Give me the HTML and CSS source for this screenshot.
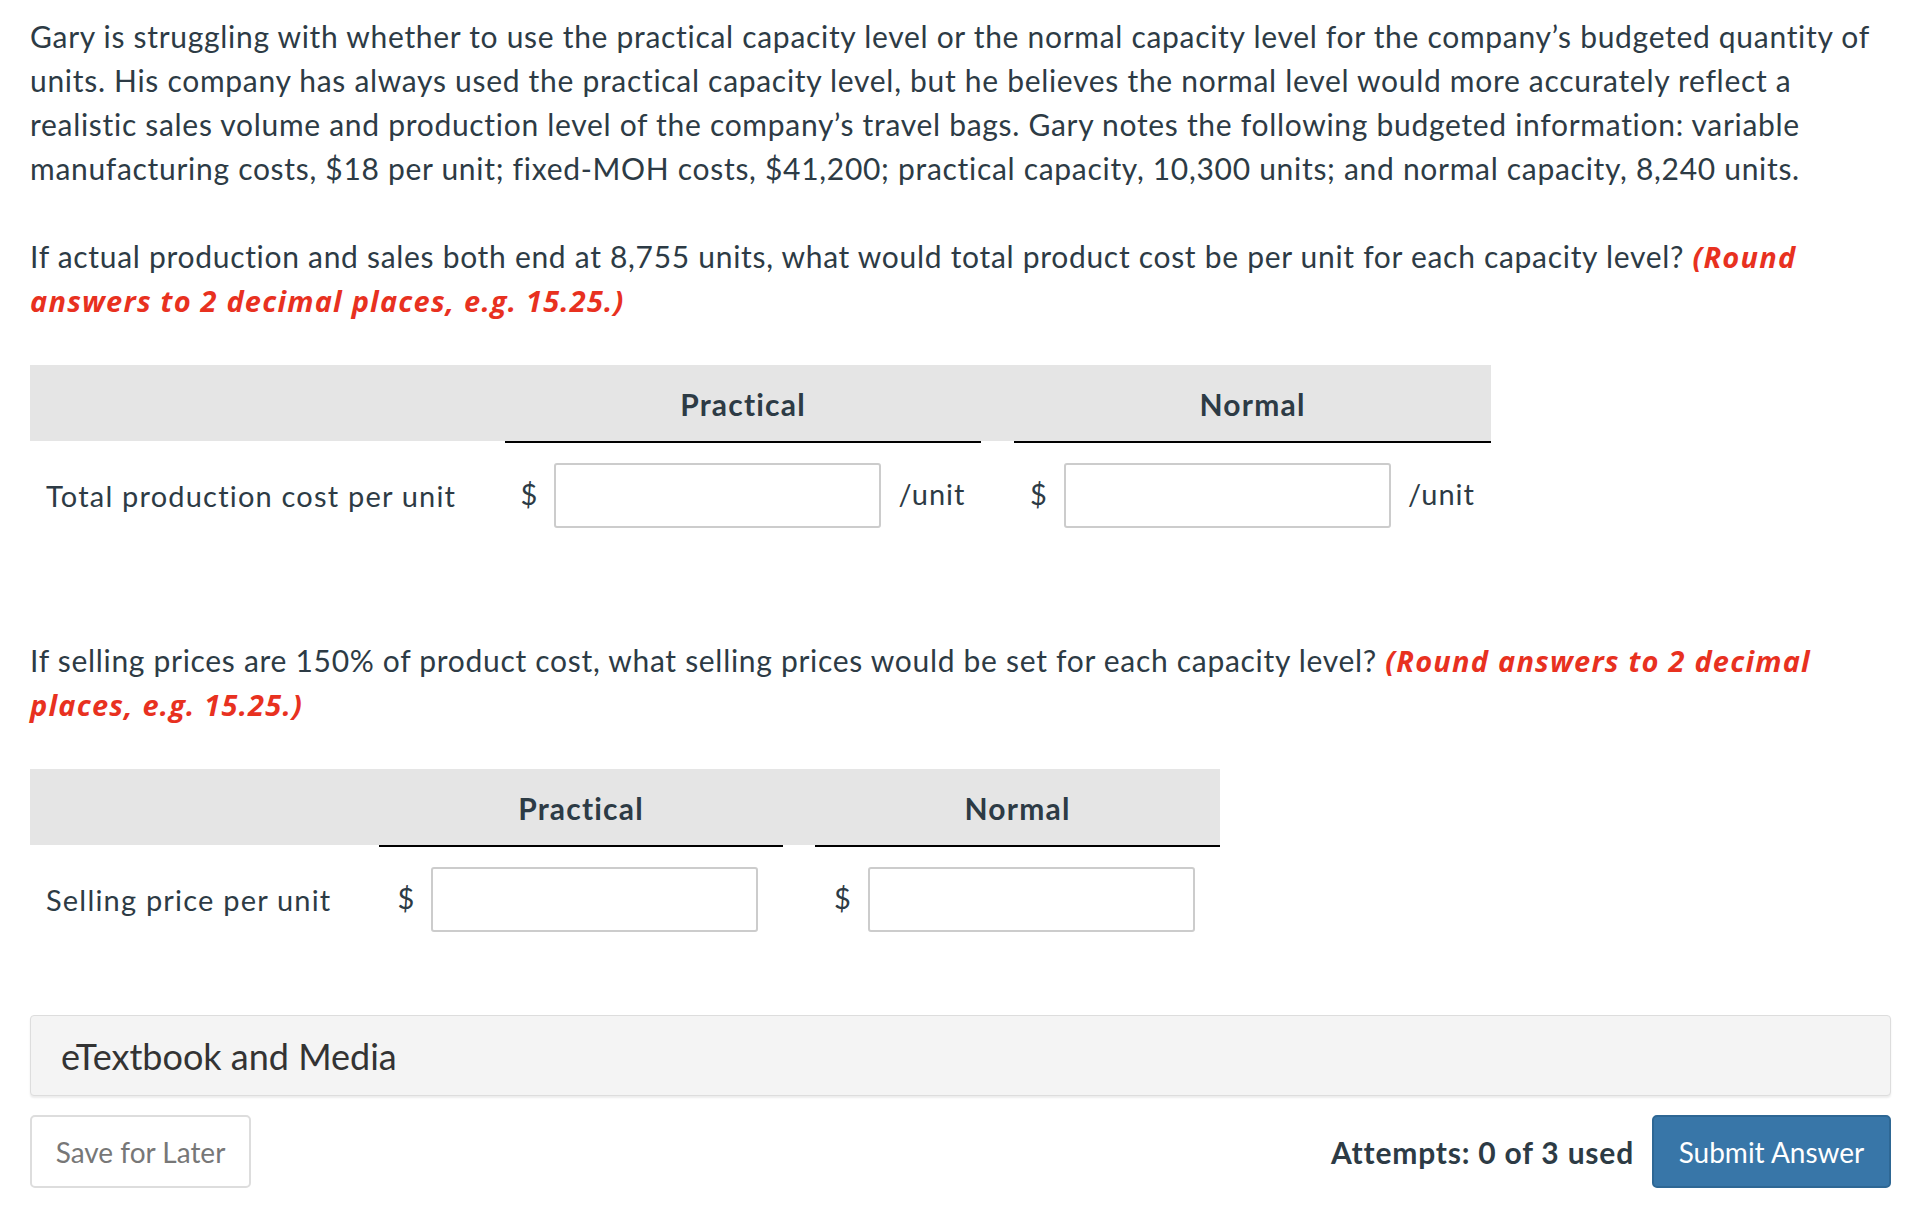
FILE: index.html
```html
<!DOCTYPE html>
<html lang="en">
<head>
<meta charset="utf-8">
<title>Question</title>
<link rel="stylesheet" href="styles.css">
</head>
<body>
<main class="page">
  <p class="para">Gary is struggling with whether to use the practical capacity level or the normal capacity level for the company’s budgeted quantity of units. His company has always used the practical capacity level, but he believes the normal level would more accurately reflect a realistic sales volume and production level of the company’s travel bags. Gary notes the following budgeted information: variable manufacturing costs, $18 per unit; fixed-MOH costs, $41,200; practical capacity, 10,300 units; and normal capacity, 8,240 units.</p>

  <p class="para">If actual production and sales both end at 8,755 units, what would total product cost be per unit for each capacity level? <span class="hint">(Round answers to 2 decimal places, e.g. 15.25.)</span></p>

  <div class="grid grid-one">
    <div class="th th-blank"></div>
    <div class="th th-col">Practical</div>
    <div class="th th-gap"></div>
    <div class="th th-col">Normal</div>

    <div class="td td-label">Total production cost per unit</div>
    <div class="td td-input"><span class="cur">$</span><span class="box"></span><span class="unit">/unit</span></div>
    <div class="td"></div>
    <div class="td td-input"><span class="cur">$</span><span class="box"></span><span class="unit">/unit</span></div>
  </div>

  <p class="para">If selling prices are 150% of product cost, what selling prices would be set for each capacity level? <span class="hint">(Round answers to 2 decimal places, e.g. 15.25.)</span></p>

  <div class="grid grid-two">
    <div class="th th-blank"></div>
    <div class="th th-col">Practical</div>
    <div class="th th-gap"></div>
    <div class="th th-col">Normal</div>

    <div class="td td-label">Selling price per unit</div>
    <div class="td td-input td-input-two"><span class="cur">$</span><span class="box"></span></div>
    <div class="td"></div>
    <div class="td td-input td-input-two"><span class="cur">$</span><span class="box"></span></div>
  </div>

  <div class="media">eTextbook and Media</div>

  <div class="actions">
    <button class="btn btn-save" type="button">Save for Later</button>
    <div class="submit-group">
      <span class="attempts">Attempts: 0 of 3 used</span>
      <button class="btn btn-submit" type="button">Submit Answer</button>
    </div>
  </div>
</main>
</body>
</html>
```

FILE: styles.css
```css
* { box-sizing: border-box; }

html, body {
  margin: 0;
  padding: 0;
  background: #ffffff;
}

body {
  font-family: Lato, "Open Sans", "Liberation Sans", sans-serif;
  color: #2d3b45;
}

.page {
  padding: 14px 25px 0 30px;
}

.para {
  margin: 0 0 44px 0;
  font-size: 30px;
  line-height: 44px;
  letter-spacing: 0.7px;
}

.hint {
  font-family: "Open Sans", Lato, "Liberation Sans", sans-serif;
  color: #e8311f;
  font-weight: 700;
  font-style: italic;
  font-size: 29px;
  line-height: 1;
  letter-spacing: 1.2px;
}

.grid {
  display: grid;
  align-items: start;
  margin-top: -1px;
}

.grid-one {
  grid-template-columns: 475px 476px 33px 477px;
  margin-bottom: 110px;
}

.grid-two {
  grid-template-columns: 349px 404px 32px 405px;
  margin-bottom: 83px;
}

.th {
  height: 76px;
  background: #e5e5e5;
  font-size: 30px;
  font-weight: 700;
  letter-spacing: 1.2px;
  display: flex;
  align-items: center;
  justify-content: center;
}

.th-col {
  height: 78px;
  border-bottom: 2px solid #000000;
  padding-top: 2px;
}

.td {
  padding-top: 20px;
  font-size: 29px;
}

.td-label {
  height: 85px;
  padding-left: 16px;
  display: flex;
  align-items: center;
  letter-spacing: 1.2px;
}

.td-input {
  display: flex;
  align-items: center;
  justify-content: center;
  gap: 17px;
}

.td-input-two {
  padding-right: 6px;
}

.box {
  display: block;
  width: 327px;
  height: 65px;
  border: 2px solid #cccccc;
  border-radius: 3px;
  background: #ffffff;
}

.cur, .unit {
  line-height: 1;
  margin-top: -4px;
}

.unit {
  letter-spacing: 1px;
}

.media {
  height: 81px;
  background: #f4f4f4;
  border: 1px solid #dddddd;
  border-radius: 4px;
  box-shadow: 0 2px 2px rgba(0, 0, 0, 0.08);
  font-size: 36px;
  display: flex;
  align-items: center;
  padding-left: 30px;
  color: #333333;
}

.actions {
  display: flex;
  justify-content: space-between;
  align-items: center;
  margin-top: 19px;
}

.btn {
  font-family: Lato, "Open Sans", "Liberation Sans", sans-serif;
  height: 73px;
  border-radius: 5px;
  font-size: 28px;
  cursor: pointer;
  padding: 0;
}

.btn-save {
  width: 221px;
  background: #ffffff;
  border: 2px solid #dddddd;
  color: #777777;
}

.submit-group {
  display: flex;
  align-items: center;
  gap: 18px;
}

.attempts {
  font-size: 30px;
  font-weight: 700;
  letter-spacing: 0.8px;
  color: #2d3b45;
}

.btn-submit {
  width: 239px;
  background: #3876a8;
  border: 2px solid #2e6794;
  color: #ffffff;
}
```
